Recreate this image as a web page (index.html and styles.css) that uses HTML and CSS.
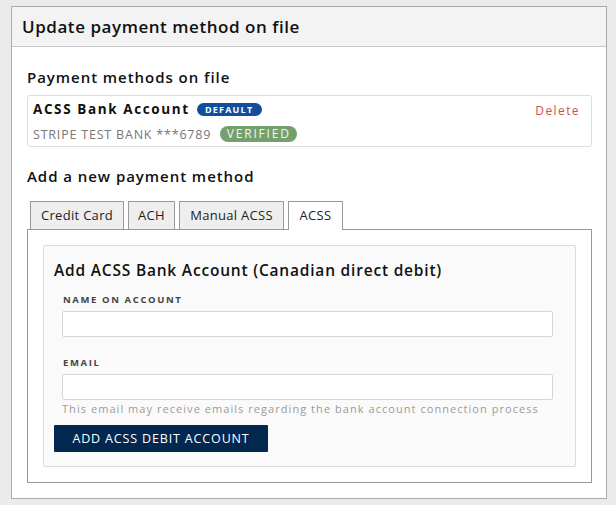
FILE: index.html
```html
<!DOCTYPE html>
<html>
<head>
<meta charset="utf-8">
<link rel="stylesheet" href="styles.css">
</head>
<body>
<div class="card">
  <div class="card-header">Update payment method on file</div>
  <div class="card-body">
    <h2 class="section-title">Payment methods on file</h2>
    <div class="method">
      <div class="method-info">
        <div class="method-row">
          <span class="method-name">ACSS Bank Account</span>
          <span class="badge badge-default">DEFAULT</span>
        </div>
        <div class="method-row">
          <span class="method-bank">STRIPE TEST BANK ***6789</span>
          <span class="badge badge-verified">VERIFIED</span>
        </div>
      </div>
      <a class="delete">Delete</a>
    </div>
    <h2 class="section-title add-title">Add a new payment method</h2>
    <div class="tabs">
      <div class="tab tab-cc">Credit Card</div>
      <div class="tab tab-ach">ACH</div>
      <div class="tab tab-manual">Manual ACSS</div>
      <div class="tab active">ACSS</div>
    </div>
    <div class="panel">
      <div class="form-box">
        <h3 class="form-title">Add ACSS Bank Account (Canadian direct debit)</h3>
        <div class="field">
          <label class="label">NAME ON ACCOUNT</label>
          <div class="input"></div>
        </div>
        <div class="field field-email">
          <label class="label">EMAIL</label>
          <div class="input"></div>
          <div class="help">This email may receive emails regarding the bank account connection process</div>
        </div>
        <button class="btn">ADD ACSS DEBIT ACCOUNT</button>
      </div>
    </div>
  </div>
</div>
</body>
</html>
```

FILE: styles.css
```css
* { box-sizing: border-box; }
html, body { margin: 0; padding: 0; }
body {
  background: #ebebeb;
  font-family: "Open Sans", "Liberation Sans", sans-serif;
  color: #111;
  padding: 6px 9px 6px 11px;
}
.card {
  width: 596px;
  height: 493px;
  background: #fff;
  border: 1px solid #aaa;
}
.card-header {
  height: 40px;
  background: #f3f3f3;
  border-bottom: 1px solid #c8c8c8;
  padding-left: 10px;
  font-size: 17px;
  font-weight: 600;
  line-height: 40px;
  letter-spacing: 0.55px;
}
.card-body {
  padding: 0 14px 0 15px;
}
.section-title {
  margin: 0;
  font-size: 15px;
  font-weight: 600;
  line-height: 20px;
  padding-top: 20px;
  letter-spacing: 0.95px;
}
.method {
  margin-top: 8px;
  height: 52px;
  border: 1px solid #ddd;
  border-radius: 3px;
  display: flex;
  justify-content: space-between;
  padding: 4px 11px 0 5px;
}
.method-info { display: flex; flex-direction: column; }
.method-row { display: flex; align-items: center; gap: 7px; }
.method-row:first-child { height: 18px; }
.method-row + .method-row { height: 26px; margin-top: 4px; }
.method-name {
  font-size: 13.5px;
  font-weight: 700;
  letter-spacing: 1.6px;
}
.badge {
  display: inline-block;
  border-radius: 8px;
  color: #fff;
  text-align: center;
}
.badge-default {
  background: #0f4f9d;
  font-size: 9px;
  font-weight: 700;
  letter-spacing: 1.2px;
  height: 13px;
  line-height: 13px;
  width: 65px;
}
.badge-verified {
  background: #74a06e;
  font-size: 12px;
  letter-spacing: 1.8px;
  height: 16px;
  line-height: 16px;
  width: 77px;
  color: #f4f4f4;
  margin-left: 2px;
}
.method-bank {
  font-size: 12.5px;
  color: #777;
  letter-spacing: 0.8px;
}
.delete {
  color: #c9544c;
  font-size: 12px;
  letter-spacing: 1.4px;
  line-height: 20px;
  padding-top: 1px;
}
.add-title { padding-top: 19px; }
.tabs {
  display: flex;
  gap: 4px;
  margin-top: 15px;
  padding-left: 3px;
  height: 28px;
  position: relative;
  z-index: 1;
}
.tab {
  height: 28px;
  border: 1px solid #999;
  border-bottom: none;
  background: #eee;
  font-size: 13px;
  line-height: 27px;
  padding: 0;
  text-align: center;
  white-space: nowrap;
  color: #222;
  letter-spacing: 0.3px;
}
.tab-cc { width: 94px; }
.tab-ach { width: 47px; }
.tab-manual { width: 105px; }
.tab.active {
  background: #fff;
  height: 29px;
  width: 55px;
}
.panel {
  height: 254px;
  border: 1px solid #999;
  padding: 15px 15px 15px 15px;
}
.form-box {
  height: 222px;
  background: #fafafa;
  border: 1px solid #dcdcdc;
  border-radius: 2px;
  padding: 14px 10px 0 10px;
}
.form-title {
  margin: 0;
  font-size: 15.5px;
  font-weight: 600;
  line-height: 20px;
  letter-spacing: 0.8px;
}
.field { margin: 0 12px 0 8px; }
.label {
  display: block;
  font-size: 9.5px;
  font-weight: 700;
  color: #444;
  letter-spacing: 1.6px;
  line-height: 12px;
  margin-top: 14px;
  padding-left: 1px;
}
.input {
  margin-top: 5px;
  height: 26px;
  background: #fff;
  border: 1px solid #d6d6d6;
  border-radius: 2px;
}
.field-email .label { margin-top: 20px; }
.help {
  font-size: 11px;
  color: #9a9a9a;
  letter-spacing: 1.05px;
  line-height: 16px;
  margin-top: 1px;
}
.btn {
  display: block;
  margin-top: 8px;
  width: 214px;
  height: 27px;
  background: #03284f;
  color: #fff;
  border: none;
  border-radius: 1px;
  font-family: "Open Sans", "Liberation Sans", sans-serif;
  font-size: 12.5px;
  letter-spacing: 0.85px;
  padding: 0;
}
```
